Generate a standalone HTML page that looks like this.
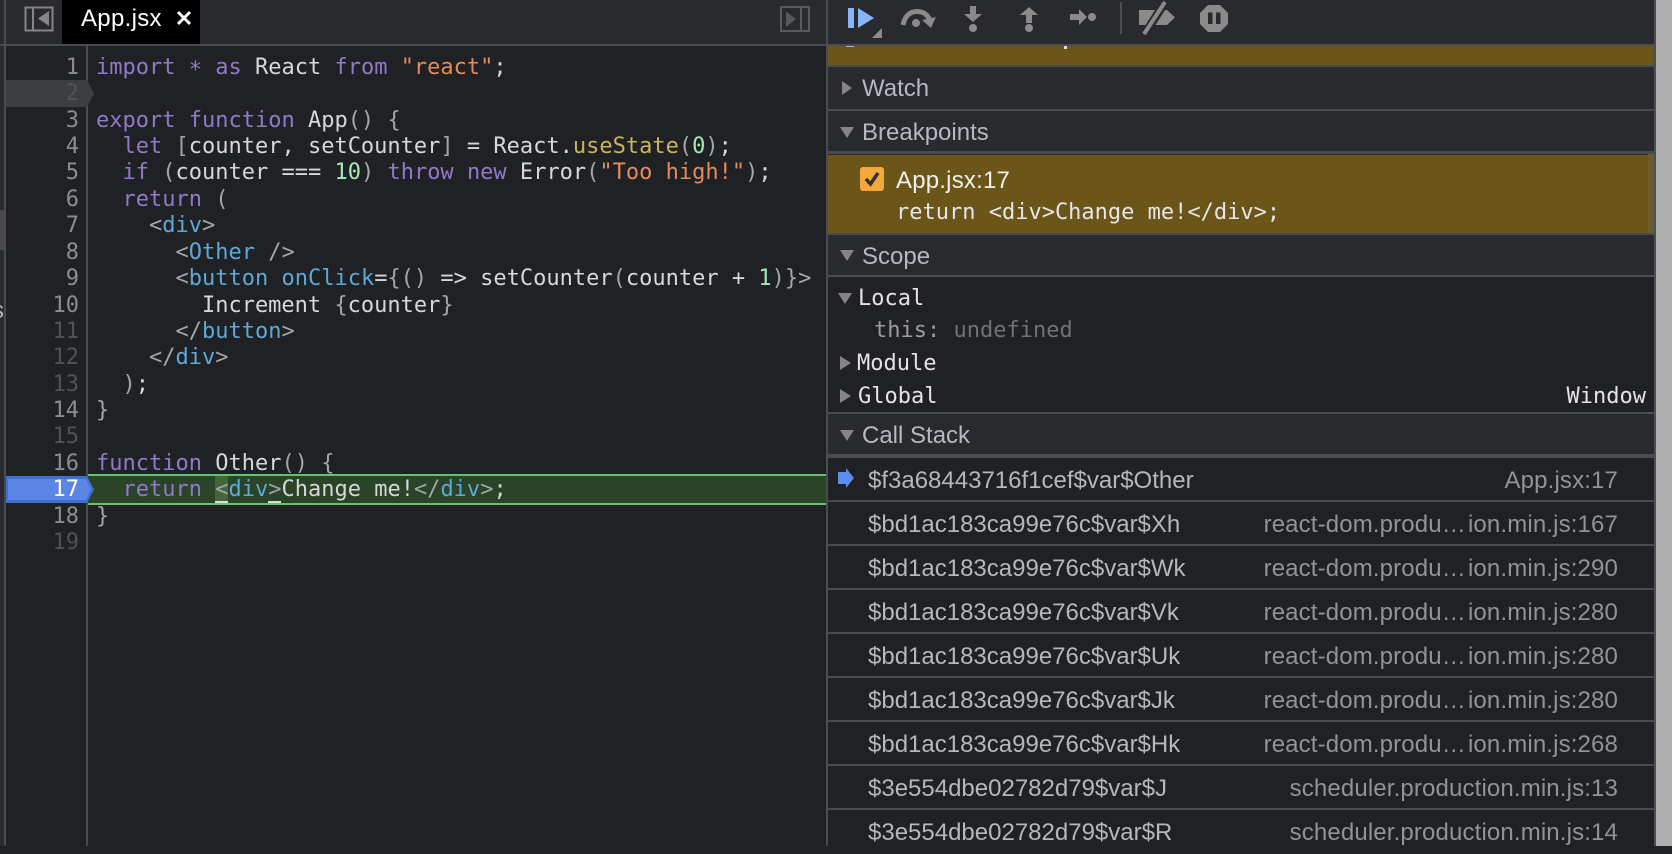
<!DOCTYPE html>
<html><head><meta charset="utf-8"><style>
html,body{margin:0;padding:0;width:1672px;height:846px;overflow:hidden;background:#202124}
div,span,svg{box-sizing:border-box}
.a{position:absolute}
.ln,.c,.m{position:absolute;font-family:"DejaVu Sans Mono","Liberation Mono",monospace;font-size:22px;line-height:26px;white-space:pre}
.ln{left:6px;width:73px;text-align:right;color:#8b8d8f}
.dim{color:#505255}
.c{left:96px;color:#d5d7da}
.k{color:#9079c9}.s{color:#e58a5b}.t{color:#5ea8d6}.n{color:#a6e9b5}.y{color:#c9b45a}.g{color:#a2a6ab}
.h{position:absolute;font:24px/40px "Liberation Sans",sans-serif;color:#b4bac2;left:862px;white-space:pre}
.b{position:absolute;background:#494b50;left:828px;width:826px}
.r{position:absolute;font:24px/42px "Liberation Sans",sans-serif;color:#b4b7bb;white-space:pre}
.f{left:868px}.u{right:54px;color:#909397;letter-spacing:.14px}
.e{letter-spacing:2.2px}
</style></head><body>
<div class="a" style="left:0;top:0;width:1672px;height:44px;background:#292a2d"></div>
<div class="a" style="left:0;top:0;width:4px;height:846px;background:#292a2d"></div>
<div class="a" style="left:0;top:210px;width:4px;height:40px;background:#4a4a48"></div>
<div class="a" style="left:4px;top:0;width:2px;height:846px;background:#494b50"></div>
<div class="a" style="left:-10px;top:296px;width:14px;height:30px;overflow:hidden;font:24px/30px 'Liberation Sans',sans-serif;color:#b4b7bb;text-align:right">s</div>
<div class="a" style="left:0;top:44px;width:828px;height:2px;background:#494b50"></div>
<div class="a" style="left:62px;top:0;width:138px;height:44px;background:#000"></div>
<div class="a" style="left:81px;top:0;font:24px/38px 'Liberation Sans',sans-serif;color:#fff;letter-spacing:.3px">App.jsx</div>
<svg class="a" style="left:0;top:0" width="830" height="46">
<path d="M178 12L190 24M190 12L178 24" stroke="#fff" stroke-width="3" fill="none"/>
<path d="M25.500 7.500H52.500V30.500H25.500ZM33 7.500V30.500" stroke="#858585" stroke-width="2" fill="none"/>
<path d="M49 11V26L38 18.500Z" fill="#858585"/>
<path d="M781 7H809V31H781ZM801 7V31" stroke="#58595c" stroke-width="2" fill="none"/>
<path d="M786 11.500V27L796 19Z" fill="#58595c"/>
</svg>
<div class="a" style="left:86px;top:46px;width:2px;height:800px;background:#494b50"></div>
<svg class="a" style="left:6px;top:80px" width="90" height="28"><path d="M0 0H81L88 13.500L81 27H0Z" fill="#3c3f42"/></svg>
<div class="a" style="left:88px;top:474px;width:740px;height:31px;background:#2b4327;border-top:2px solid #62c46e;border-bottom:2px solid #62c46e"></div>
<svg class="a" style="left:6px;top:476px" width="90" height="28"><path d="M0 0H81L88 13.500L81 27H0Z" fill="#3f70d0"/><path d="M2 3H80L85 13.500L80 24H2Z" fill="#5b85e6"/></svg>
<div class="a" style="left:215px;top:476px;width:13px;height:27px;background:#44663a"></div>
<div class="a" style="left:215px;top:501px;width:13px;height:2px;background:#ddd"></div>
<div class="a" style="left:268px;top:501px;width:13px;height:2px;background:#ddd"></div>

<div class="ln" style="top:55px">1</div>
<div class="ln dim" style="top:81px">2</div>
<div class="ln" style="top:108px">3</div>
<div class="ln" style="top:134px">4</div>
<div class="ln" style="top:160px">5</div>
<div class="ln" style="top:187px">6</div>
<div class="ln" style="top:213px">7</div>
<div class="ln" style="top:240px">8</div>
<div class="ln" style="top:266px">9</div>
<div class="ln" style="top:293px">10</div>
<div class="ln dim" style="top:319px">11</div>
<div class="ln dim" style="top:345px">12</div>
<div class="ln dim" style="top:372px">13</div>
<div class="ln" style="top:398px">14</div>
<div class="ln dim" style="top:424px">15</div>
<div class="ln" style="top:451px">16</div>
<div class="ln" style="top:477px;color:#fff">17</div>
<div class="ln" style="top:504px">18</div>
<div class="ln dim" style="top:530px">19</div>

<div class="c" style="top:55px"><span class="k">import</span> <span class="k" style="position:relative;top:3px">*</span> <span class="k">as</span> React <span class="k">from</span> <span class="s">"react"</span>;</div>
<div class="c" style="top:108px"><span class="k">export</span> <span class="k">function</span> App<span class="g">()</span> <span class="g">{</span></div>
<div class="c" style="top:134px">  <span class="k">let</span> <span class="g">[</span>counter, setCounter<span class="g">]</span> = React.<span class="y">useState</span><span class="g">(</span><span class="n">0</span><span class="g">)</span>;</div>
<div class="c" style="top:160px">  <span class="k">if</span> <span class="g">(</span>counter === <span class="n">10</span><span class="g">)</span> <span class="k">throw</span> <span class="k">new</span> Error<span class="g">(</span><span class="s">"Too high!"</span><span class="g">)</span>;</div>
<div class="c" style="top:187px">  <span class="k">return</span> <span class="g">(</span></div>
<div class="c" style="top:213px">    <span class="g">&lt;</span><span class="t">div</span><span class="g">&gt;</span></div>
<div class="c" style="top:240px">      <span class="g">&lt;</span><span class="t">Other</span> <span class="g">/&gt;</span></div>
<div class="c" style="top:266px">      <span class="g">&lt;</span><span class="t">button</span> <span class="t">onClick</span>=<span class="g">{()</span> =&gt; setCounter<span class="g">(</span>counter + <span class="n">1</span><span class="g">)}&gt;</span></div>
<div class="c" style="top:293px">        Increment <span class="g">{</span>counter<span class="g">}</span></div>
<div class="c" style="top:319px">      <span class="g">&lt;/</span><span class="t">button</span><span class="g">&gt;</span></div>
<div class="c" style="top:345px">    <span class="g">&lt;/</span><span class="t">div</span><span class="g">&gt;</span></div>
<div class="c" style="top:372px">  <span class="g">)</span>;</div>
<div class="c" style="top:398px"><span class="g">}</span></div>
<div class="c" style="top:451px"><span class="k">function</span> Other<span class="g">()</span> <span class="g">{</span></div>
<div class="c" style="top:477px">  <span class="k">return</span> <span class="g">&lt;</span><span class="t">div</span><span class="g">&gt;</span>Change me!<span class="g">&lt;/</span><span class="t">div</span><span class="g">&gt;</span>;</div>
<div class="c" style="top:504px"><span class="g">}</span></div>

<div class="a" style="left:826px;top:0;width:2px;height:846px;background:#494b50"></div>
<div class="a" style="left:1654px;top:0;width:2px;height:846px;background:#4d4e55"></div>
<div class="a" style="left:1656px;top:0;width:16px;height:846px;background:#b0b0b0"></div>
<div class="a" style="left:828px;top:0;width:826px;height:846px;background:#292a2d"></div>
<div class="b" style="top:44px;height:2px"></div>
<div class="a" style="left:828px;top:46px;width:826px;height:19px;background:#6b5518"></div>
<div class="a" style="left:846px;top:46px;width:8px;height:1px;background:#9fb8e0"></div>
<div class="a" style="left:1064px;top:46px;width:3px;height:3px;background:#ddd"></div>
<div class="b" style="top:65px;height:2px"></div>
<div class="b" style="top:109px;height:2px"></div>
<div class="b" style="top:151px;height:3px"></div>
<div class="a" style="left:828px;top:155px;width:826px;height:78px;background:#6b5518"></div>
<div class="a" style="left:1648px;top:154px;width:6px;height:79px;background:#6a5a2c"></div>
<div class="b" style="top:233px;height:2px"></div>
<div class="b" style="top:275px;height:2px"></div>
<div class="a" style="left:828px;top:277px;width:826px;height:135px;background:#202124"></div>
<div class="b" style="top:412px;height:2px"></div>
<div class="b" style="top:454px;height:4px"></div>
<div class="a" style="left:828px;top:458px;width:826px;height:388px;background:#202124"></div>
<div class="b" style="top:500px;height:2px"></div>
<div class="b" style="top:544px;height:2px"></div>
<div class="b" style="top:588px;height:2px"></div>
<div class="b" style="top:632px;height:2px"></div>
<div class="b" style="top:676px;height:2px"></div>
<div class="b" style="top:720px;height:2px"></div>
<div class="b" style="top:764px;height:2px"></div>
<div class="b" style="top:808px;height:2px"></div>

<svg class="a" style="left:828px;top:0" width="826" height="846" viewBox="828 0 826 846">
<rect x="848" y="8" width="6" height="20" fill="#8ab4f8"/>
<path d="M858 8L874 18L858 28Z" fill="#8ab4f8"/>
<path d="M882 28V38H872Z" fill="#8a8a8a"/>
<path d="M903 25C905 15 911 11.500 917 11.500C923 11.500 927 14 930 20" stroke="#8a8a8a" stroke-width="5" fill="none"/>
<path d="M922 20L936 17L931 28Z" fill="#8a8a8a"/>
<circle cx="916" cy="23" r="4" fill="#8a8a8a"/>
<path d="M970 6H976V14H982L973 22L964 14H970Z" fill="#8a8a8a"/>
<circle cx="973" cy="28" r="4" fill="#8a8a8a"/>
<path d="M1029 7L1038 15H1032V23H1026V15H1020Z" fill="#8a8a8a"/>
<circle cx="1029" cy="28" r="4" fill="#8a8a8a"/>
<path d="M1070 14H1079V9L1087 17L1079 25V20H1070Z" fill="#8a8a8a"/>
<circle cx="1092" cy="17" r="4" fill="#8a8a8a"/>
<rect x="1120" y="2" width="2" height="32" fill="#4a4c50"/>
<path d="M1139 10H1155L1145.500 25H1139Z" fill="#8a8a8a"/>
<path d="M1165 10H1167L1175 17.500L1167 25H1155.500Z" fill="#8a8a8a"/>
<path d="M1165 2L1144 34" stroke="#8a8a8a" stroke-width="4"/>
<path d="M1208 5H1220L1228 13V24L1220 32H1208L1200 24V13Z" fill="#8a8a8a"/>
<rect x="1208" y="12.500" width="4.500" height="11.500" fill="#292a2d"/>
<rect x="1216" y="12.500" width="4.500" height="11.500" fill="#292a2d"/>
<path d="M842 81V95L852 88Z" fill="#858585"/>
<path d="M840 127H854L847 138Z" fill="#858585"/>
<path d="M840 250H854L847 261Z" fill="#858585"/>
<path d="M838 293H852L845 304Z" fill="#858585"/>
<path d="M840 356V370L851 363Z" fill="#858585"/>
<path d="M840 389V403L851 396Z" fill="#858585"/>
<path d="M840 430H854L847 441Z" fill="#858585"/>
<path d="M838 472H846V468L854 478L846 488V484H838Z" fill="#5b8def"/>
<rect x="860" y="167" width="24" height="24" rx="3" fill="#f4a83b"/>
<path d="M866 179L870.500 184L878 173" stroke="#333" stroke-width="3.500" fill="none"/>
</svg>

<div class="h" style="top:69px">Watch</div>
<div class="h" style="top:113px">Breakpoints</div>
<div class="h" style="top:237px">Scope</div>
<div class="h" style="top:416px">Call Stack</div>

<div class="r" style="left:896px;top:159px;color:#f0f0f0;line-height:44px;letter-spacing:.2px">App.jsx:17</div>
<div class="m" style="left:896px;top:200px;color:#e6e6e6">return &lt;div&gt;Change me!&lt;/div&gt;;</div>

<div class="m" style="left:858px;top:285.500px;color:#e4e4e4">Local</div>
<div class="m" style="left:874px;top:317.500px;color:#9a9c9f">this: <span style="color:#6f7175">undefined</span></div>
<div class="m" style="left:857px;top:350.500px;color:#e4e4e4">Module</div>
<div class="m" style="left:858px;top:383.500px;color:#e4e4e4">Global</div>
<div class="m" style="right:26px;top:383.500px;color:#e4e4e4">Window</div>

<div class="r f" style="top:460px">$f3a68443716f1cef$var$Other</div><div class="r u" style="top:460px">App.jsx:17</div>
<div class="r f" style="top:504px">$bd1ac183ca99e76c$var$Xh</div><div class="r u" style="top:504px">react-dom.produ<span class="e">…</span>ion.min.js:167</div>
<div class="r f" style="top:548px">$bd1ac183ca99e76c$var$Wk</div><div class="r u" style="top:548px">react-dom.produ<span class="e">…</span>ion.min.js:290</div>
<div class="r f" style="top:592px">$bd1ac183ca99e76c$var$Vk</div><div class="r u" style="top:592px">react-dom.produ<span class="e">…</span>ion.min.js:280</div>
<div class="r f" style="top:636px">$bd1ac183ca99e76c$var$Uk</div><div class="r u" style="top:636px">react-dom.produ<span class="e">…</span>ion.min.js:280</div>
<div class="r f" style="top:680px">$bd1ac183ca99e76c$var$Jk</div><div class="r u" style="top:680px">react-dom.produ<span class="e">…</span>ion.min.js:280</div>
<div class="r f" style="top:724px">$bd1ac183ca99e76c$var$Hk</div><div class="r u" style="top:724px">react-dom.produ<span class="e">…</span>ion.min.js:268</div>
<div class="r f" style="top:768px">$3e554dbe02782d79$var$J</div><div class="r u" style="top:768px">scheduler.production.min.js:13</div>
<div class="r f" style="top:812px">$3e554dbe02782d79$var$R</div><div class="r u" style="top:812px">scheduler.production.min.js:14</div>
</body></html>
